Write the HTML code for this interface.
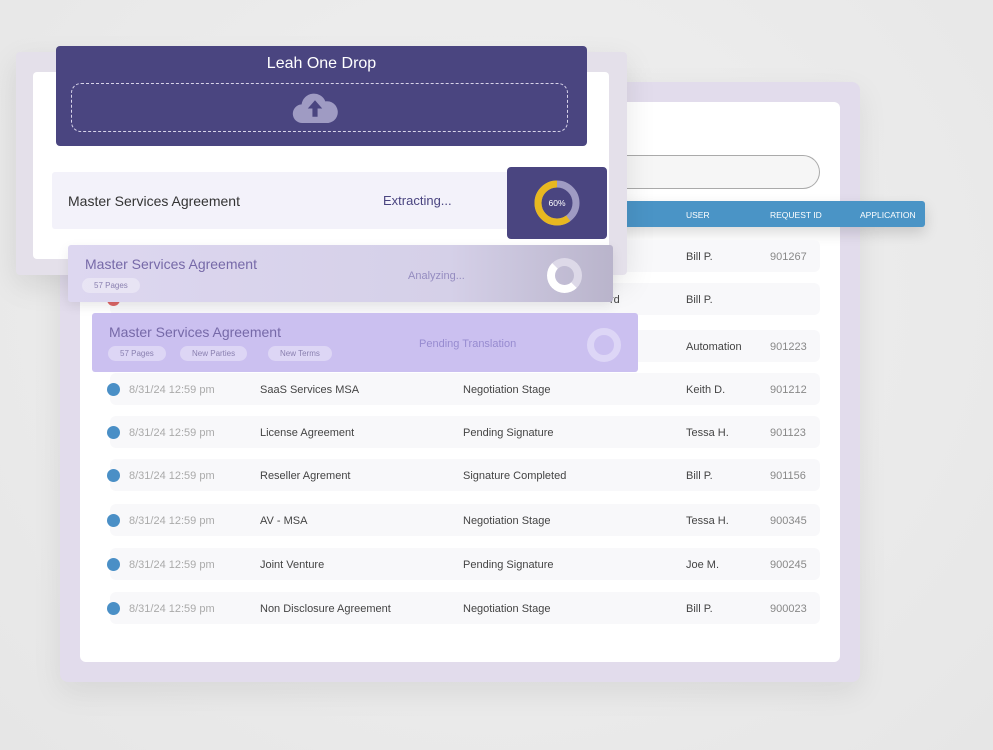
<!DOCTYPE html>
<html><head><style>
*{margin:0;padding:0;box-sizing:border-box}
body{width:993px;height:750px;overflow:hidden;background:radial-gradient(ellipse at 50% 40%,#f1f1f1,#e6e6e6);font-family:"Liberation Sans",sans-serif;position:relative}
.abs{position:absolute}
.row{position:absolute;left:110px;width:710px;height:32px;background:#f8f8fa;border-radius:6px;font-size:11px;color:#444}
.row span{position:absolute;top:11px}
.dot{position:absolute;left:-3px;top:10px;width:13px;height:13px;border-radius:50%;background:#4a8fc6}
.d{left:19px;color:#aaa}.n{left:150px}.s{left:353px}.u{left:576px}.i{left:660px;color:#888}
.tag{position:absolute;height:15px;border-radius:8px;background:rgba(255,255,255,.35);font-size:8px;color:#8a80b0;padding:3px 12px}
</style></head><body>
<div class="abs" style="left:60px;top:82px;width:800px;height:600px;background:#e2dcec;border-radius:8px;box-shadow:0 10px 30px rgba(0,0,0,.08)"></div>
<div class="abs" style="left:80px;top:102px;width:760px;height:560px;background:#fff;border-radius:6px"></div>
<div class="abs" style="left:560px;top:155px;width:260px;height:34px;border:1px solid #aaa;border-left:none;border-radius:0 17px 17px 0;background:#f6f6f6"></div>
<div class="abs" style="left:600px;top:201px;width:325px;height:26px;background:#4a94c6;border-radius:0 3px 3px 0;color:#fff;font-size:8.5px;box-shadow:0 6px 14px rgba(0,0,0,.15)">
<span class="abs" style="left:86px;top:9px">USER</span><span class="abs" style="left:170px;top:9px">REQUEST ID</span><span class="abs" style="left:260px;top:9px">APPLICATION</span></div>
<div class="row" style="top:240px"><span class="u">Bill P.</span><span class="i">901267</span></div>
<div class="row" style="top:283px"><div class="dot" style="background:#d66"></div><span class="u">Bill P.</span><span class="abs" style="left:500px;top:11px">rd</span></div>
<div class="row" style="top:330px"><span class="u">Automation</span><span class="i">901223</span></div>
<div class="row" style="top:373px"><div class="dot"></div><span class="d">8/31/24 12:59 pm</span><span class="n">SaaS Services MSA</span><span class="s">Negotiation Stage</span><span class="u">Keith D.</span><span class="i">901212</span></div>
<div class="row" style="top:416px"><div class="dot"></div><span class="d">8/31/24 12:59 pm</span><span class="n">License Agreement</span><span class="s">Pending Signature</span><span class="u">Tessa H.</span><span class="i">901123</span></div>
<div class="row" style="top:459px"><div class="dot"></div><span class="d">8/31/24 12:59 pm</span><span class="n">Reseller Agrement</span><span class="s">Signature Completed</span><span class="u">Bill P.</span><span class="i">901156</span></div>
<div class="row" style="top:504px"><div class="dot"></div><span class="d">8/31/24 12:59 pm</span><span class="n">AV - MSA</span><span class="s">Negotiation Stage</span><span class="u">Tessa H.</span><span class="i">900345</span></div>
<div class="row" style="top:548px"><div class="dot"></div><span class="d">8/31/24 12:59 pm</span><span class="n">Joint Venture</span><span class="s">Pending Signature</span><span class="u">Joe M.</span><span class="i">900245</span></div>
<div class="row" style="top:592px"><div class="dot"></div><span class="d">8/31/24 12:59 pm</span><span class="n">Non Disclosure Agreement</span><span class="s">Negotiation Stage</span><span class="u">Bill P.</span><span class="i">900023</span></div>
<div class="abs" style="left:16px;top:52px;width:611px;height:223px;background:#e4e0ea;border-radius:4px;box-shadow:0 10px 30px rgba(0,0,0,.1)"></div>
<div class="abs" style="left:33px;top:72px;width:576px;height:187px;background:#fff;border-radius:4px"></div>
<div class="abs" style="left:56px;top:46px;width:531px;height:100px;background:#4a4580;border-radius:4px">
<div class="abs" style="left:0;width:100%;top:9px;text-align:center;color:#fff;font-size:16px">Leah One Drop</div>
<div class="abs" style="left:15px;top:37px;width:497px;height:49px;border:1px dashed #d8d4ea;border-radius:10px"></div>
<svg class="abs" style="left:236px;top:45px" width="46" height="33" viewBox="0 0 44 32"><path d="M10 31a9 9 0 0 1-1-18 12 12 0 0 1 23-3 9 9 0 0 1 3 21z" fill="#9f9bc3"/><path d="M22 9l-7 8h4.5v8h5v-8H29z" fill="#4a4580"/></svg>
</div>
<div class="abs" style="left:52px;top:172px;width:480px;height:57px;background:#f3f2fa;border-radius:3px">
<span class="abs" style="left:16px;top:21px;font-size:14px;color:#333">Master Services Agreement</span>
<span class="abs" style="left:331px;top:21px;font-size:13px;color:#4a4580">Extracting...</span></div>
<div class="abs" style="left:507px;top:167px;width:100px;height:72px;background:#4a4580;border-radius:4px">
<svg class="abs" style="left:25px;top:11px" width="50" height="50" viewBox="0 0 50 50"><circle cx="25" cy="25" r="19" fill="none" stroke="#9f9bc3" stroke-width="7"/><circle cx="25" cy="25" r="19" fill="none" stroke="#e8b820" stroke-width="7" stroke-dasharray="71.6 120" transform="rotate(-90 25 25) scale(1 -1) translate(0 -50)" /><text x="25" y="28" text-anchor="middle" font-size="8.5" fill="#fff" font-family="Liberation Sans">60%</text></svg></div>
<div class="abs" style="left:68px;top:245px;width:545px;height:57px;background:linear-gradient(90deg,#ddd7f0,#d5d0e8 70%,#b9b4cb);border-radius:3px;box-shadow:0 4px 12px rgba(0,0,0,.08)">
<span class="abs" style="left:17px;top:11px;font-size:14px;color:#7669a8">Master Services Agreement</span>
<div class="tag" style="left:14px;top:33px;">57 Pages</div>
<span class="abs" style="left:340px;top:25px;font-size:11px;color:#958cc0">Analyzing...</span>
<div class="abs" style="left:479px;top:13px;width:35px;height:35px;border-radius:50%;border:8px solid #ddd9e8;border-left-color:#fff;border-bottom-color:#fff"></div></div>
<div class="abs" style="left:92px;top:313px;width:546px;height:59px;background:#cbc0f0;border-radius:3px">
<span class="abs" style="left:17px;top:11px;font-size:14px;color:#7669a8">Master Services Agreement</span>
<div class="tag" style="left:16px;top:33px">57 Pages</div><div class="tag" style="left:88px;top:33px">New Parties</div><div class="tag" style="left:176px;top:33px">New Terms</div>
<span class="abs" style="left:327px;top:25px;font-size:11px;color:#978bd0">Pending Translation</span>
<div class="abs" style="left:495px;top:15px;width:34px;height:34px;border-radius:50%;border:7px solid #ddd6f6"></div></div>
</body></html>
